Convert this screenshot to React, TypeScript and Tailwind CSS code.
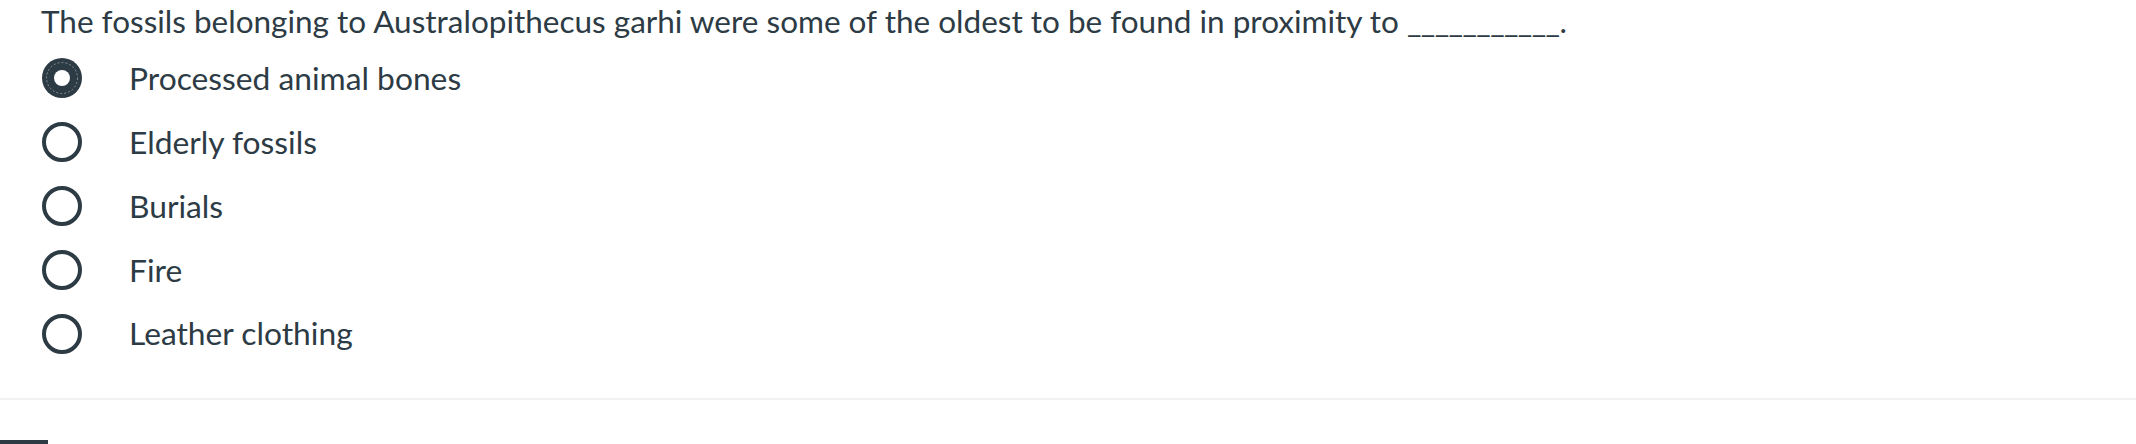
import React from "react";

const options = [
  "Processed animal bones",
  "Elderly fossils",
  "Burials",
  "Fire",
  "Leather clothing",
];

function Radio({ checked }: { checked: boolean }) {
  return (
    <svg width="40" height="40" viewBox="0 0 40 40" className="shrink-0">
      {checked ? (
        <>
          <circle cx="20" cy="20" r="20" fill="#2d3b45" />
          <circle cx="20" cy="20" r="15.5" fill="none" stroke="#9aa3a9" strokeWidth="0.8" strokeDasharray="2 2" />
          <circle cx="20" cy="20" r="8" fill="#ffffff" />
        </>
      ) : (
        <circle cx="20" cy="20" r="18" fill="#ffffff" stroke="#2d3b45" strokeWidth="4" />
      )}
    </svg>
  );
}

export default function App() {
  return (
    <div className="w-[2136px] h-[444px] bg-white overflow-hidden text-[#2d3b45] font-['Lato',sans-serif] flex flex-col">
      <div className="pl-[41px] pt-[3px] text-[31.5px] leading-[1.2] h-[46px] whitespace-nowrap">
        The fossils belonging to Australopithecus garhi were some of the oldest to be found in proximity to{" "}
        <span className="tracking-[-0.6px]">___________</span>.
      </div>
      <div className="flex flex-col">
        {options.map((o, i) => (
          <div key={o} className="h-[63.9px] flex items-center pl-[42px]">
            <Radio checked={i === 0} />
            <span className="ml-[47px] text-[31.75px] leading-[1.2]">{o}</span>
          </div>
        ))}
      </div>
      <div className="h-[33px]" />
      <div className="h-[2px] bg-[#f2f2f2]" />
      <div className="flex-1" />
      <div className="w-[48px] h-[4px] bg-[#2d3b45]" />
    </div>
  );
}
